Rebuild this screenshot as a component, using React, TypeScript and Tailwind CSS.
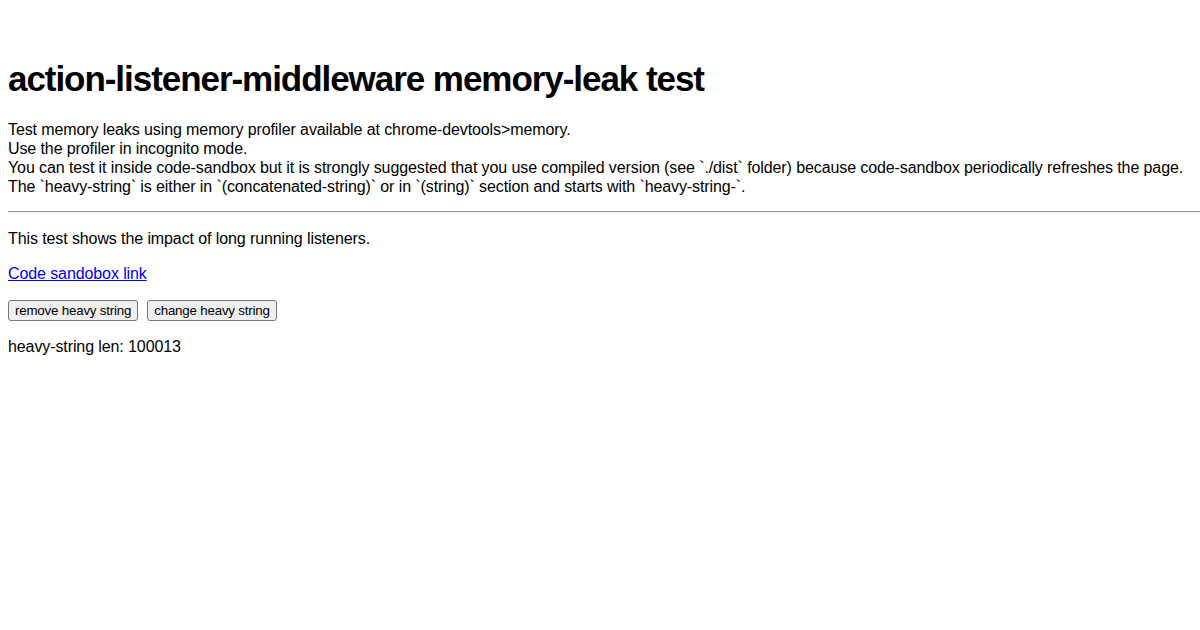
export default function App() {
  return (
    <div className="bg-white text-black pl-2 pt-[59px] min-h-[630px] font-['Liberation_Sans',Arial,sans-serif] text-[16px] leading-[19px] tracking-[-0.1px]">
      <h1 className="text-[35px] font-bold leading-[40px] tracking-[-1.05px]">action-listener-middleware memory-leak test</h1>
      <p className="mt-[20.5px]">
        Test memory leaks using memory profiler available at chrome-devtools&gt;memory.
        <br />
        Use the profiler in incognito mode.
        <br />
        You can test it inside code-sandbox but it is strongly suggested that you use compiled version (see `./dist` folder) because code-sandbox periodically refreshes the page.
        <br />
        The `heavy-string` is either in `(concatenated-string)` or in `(string)` section and starts with `heavy-string-`.
      </p>
      <hr className="mt-[15.5px] border-0 border-t border-b border-t-[#9a9a9a] border-b-[#eeeeee] h-0" />
      <p className="mt-[15.5px]">This test shows the impact of long running listeners.</p>
      <p className="mt-[16px]">
        <a href="#" className="text-[#0000ee] underline">Code sandobox link</a>
      </p>
      <div className="mt-[17px] flex items-center h-[21px]">
        <button className="mr-[9px] h-[21px] px-[6px] border border-[#767676] bg-[#efefef] rounded-[3px] text-[13.33px] leading-[15px] tracking-[-0.2px] font-['Liberation_Sans',Arial,sans-serif]">remove heavy string</button>
        <button className="h-[21px] px-[6px] border border-[#767676] bg-[#efefef] rounded-[3px] text-[13.33px] leading-[15px] tracking-[-0.2px] font-['Liberation_Sans',Arial,sans-serif]">change heavy string</button>
      </div>
      <p className="mt-[16.7px]">heavy-string len: 100013</p>
    </div>
  );
}
